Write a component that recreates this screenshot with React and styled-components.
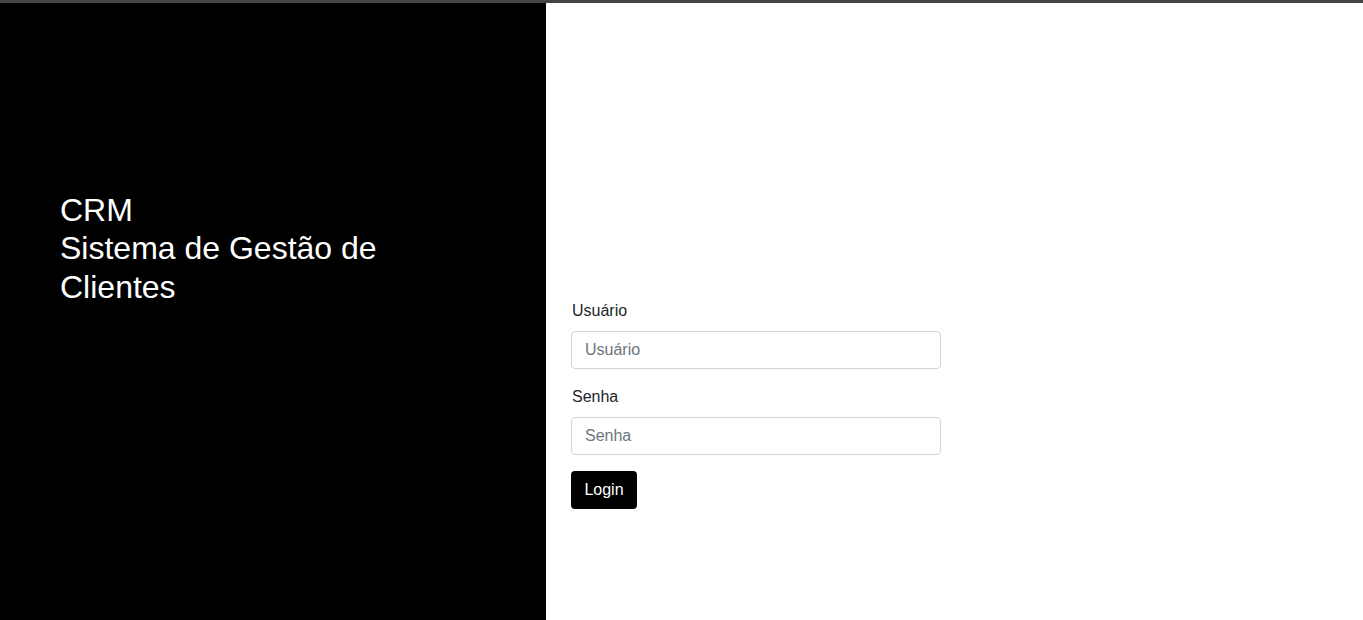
import styled, { createGlobalStyle } from 'styled-components';

const Global = createGlobalStyle`
  html, body { margin: 0; padding: 0; }
  body {
    font-family: "Liberation Sans", Arial, sans-serif;
    background: #fff;
    color: #212529;
  }
  * { box-sizing: border-box; }
`

const Page = styled.div`
  display: flex;
  min-height: 620px;
  border-top: 3px solid #444;
`

const Side = styled.div`
  width: 546px;
  background: #000;
  color: #fff;
  padding: 188px 60px 0;
`

const Title = styled.h1`
  margin: 0;
  font-size: 32px;
  font-weight: 400;
  line-height: 1.2;
`

const Main = styled.div`
  flex: 1;
  padding: 296px 0 0 25px;
`

const Form = styled.form`
  width: 370px;
  display: flex;
  flex-direction: column;
  align-items: flex-start;
`

const Label = styled.label`
  font-size: 16px;
  line-height: 24px;
  margin-bottom: 8px;
  padding-left: 1px;
  color: #212529;
`

const Input = styled.input`
  width: 100%;
  height: 38px;
  padding: 6px 13px;
  margin-bottom: 16px;
  font-family: inherit;
  font-size: 16px;
  border: 1px solid #ced4da;
  border-radius: 4px;
  &::placeholder { color: #6c757d; }
`

const Button = styled.button`
  height: 38px;
  width: 66px;
  padding: 0;
  background: #000;
  color: #fff;
  border: none;
  border-radius: 4px;
  font-family: inherit;
  font-size: 16px;
`

export default function App() {
  return (
    <>
      <Global />
      <Page>
        <Side>
          <Title>CRM<br />Sistema de Gestão de Clientes</Title>
        </Side>
        <Main>
          <Form onSubmit={e => e.preventDefault()}>
            <Label htmlFor="user">Usuário</Label>
            <Input id="user" placeholder="Usuário" />
            <Label htmlFor="pass">Senha</Label>
            <Input id="pass" type="password" placeholder="Senha" />
            <Button type="submit">Login</Button>
          </Form>
        </Main>
      </Page>
    </>
  );
}
